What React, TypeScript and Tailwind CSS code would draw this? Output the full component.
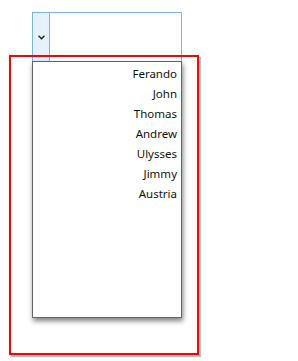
const names = ['Ferando', 'John', 'Thomas', 'Andrew', 'Ulysses', 'Jimmy', 'Austria']

export default function App() {
  return (
    <div className="relative w-[298px] h-[361px] bg-white font-['Segoe_UI','Noto_Sans',sans-serif]">
      {/* combo box */}
      <div className="pt-[12px] pl-[32px]">
        <div className="flex w-[150px] h-[50px] border border-[#7eb4ea] bg-white">
          <div className="flex w-[17px] items-center justify-center bg-[#e5f1fb] border-r border-[#7eb4ea]">
            <svg width="7" height="5" viewBox="0 0 7 5" className="mt-[1px]">
              <path d="M0.5 0.8 L3.5 3.8 L6.5 0.8" fill="none" stroke="#1e1e1e" strokeWidth="1.3" />
            </svg>
          </div>
        </div>
      </div>

      {/* dropdown popup */}
      <div className="absolute left-[32px] top-[61px] w-[150px] h-[257px] border border-[#646464] bg-white shadow-[1px_3px_5px_rgba(0,0,0,0.5)]">
        <ul className="pt-[2px] pr-[4px] text-right text-[11.5px] leading-[20px] text-[#111]">
          {names.map((n) => (
            <li key={n}>{n}</li>
          ))}
        </ul>
      </div>

      {/* highlight */}
      <div className="absolute left-[9px] top-[55px] w-[190px] h-[300px] border-2 border-[#ff0000] shadow-[2px_2px_1px_rgba(0,0,0,0.25)]" />
    </div>
  )
}
